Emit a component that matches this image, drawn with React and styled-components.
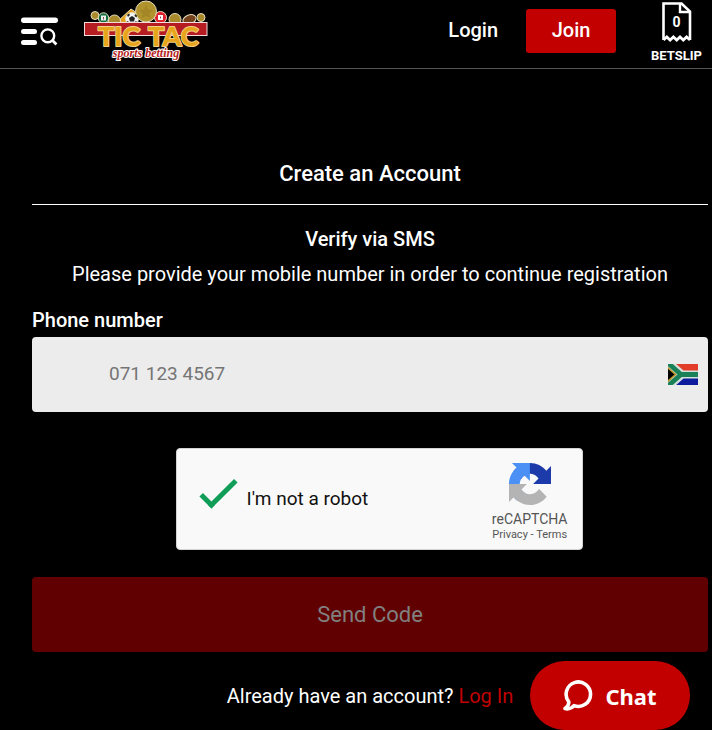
import React, { useState } from 'react'
import styled, { createGlobalStyle } from 'styled-components'

const App = () => {
  const [phone, setPhone] = useState('')

  return (
    <>
      <GlobalStyle />
      <Header>
        <IconButton aria-label="Menu and search">
          <MenuSearchIcon />
        </IconButton>
        <LogoLink href="#home" aria-label="Tic Tac sports betting">
          <Logo />
        </LogoLink>
        <LoginLink href="#login">Login</LoginLink>
        <JoinButton>Join</JoinButton>
        <BetslipButton>
          <BetslipCount>
            <BetslipIcon />
            <span>0</span>
          </BetslipCount>
          BETSLIP
        </BetslipButton>
      </Header>

      <Main>
        <Title>Create an Account</Title>
        <SubTitle>Verify via SMS</SubTitle>
        <Lead>Please provide your mobile number in order to continue registration</Lead>

        <form onSubmit={(e) => e.preventDefault()}>
          <Label htmlFor="phone">Phone number</Label>
          <PhoneField>
            <PhoneInput
              id="phone"
              type="tel"
              placeholder="071 123 4567"
              value={phone}
              onChange={(e) => setPhone(e.target.value)}
            />
            <Flag />
          </PhoneField>

          <CaptchaRow>
            <Captcha>
              <CaptchaCheck type="checkbox" id="robot" defaultChecked />
              <CaptchaLabel htmlFor="robot">I'm not a robot</CaptchaLabel>
              <CaptchaBrand>
                <CaptchaIcon />
                <span>reCAPTCHA</span>
                <CaptchaLinks>
                  <a href="#privacy">Privacy</a> - <a href="#terms">Terms</a>
                </CaptchaLinks>
              </CaptchaBrand>
            </Captcha>
          </CaptchaRow>

          <SendButton disabled>Send Code</SendButton>
        </form>

        <Footer>
          Already have an account? <a href="#login">Log In</a>
        </Footer>
      </Main>

      <ChatButton>
        <ChatIcon />
        Chat
      </ChatButton>
    </>
  )
}

const MenuSearchIcon = () => (
  <svg width="38" height="30" viewBox="0 0 38 30" fill="#fff">
    <rect x="0" y="0.5" width="37" height="5.5" rx="2.75" />
    <rect x="0" y="12" width="16" height="5" rx="2.5" />
    <rect x="0" y="23" width="16" height="5" rx="2.5" />
    <circle cx="26.8" cy="18.8" r="6.4" fill="none" stroke="#fff" strokeWidth="2.4" />
    <path d="M31.6 23.6l3.8 3.8" stroke="#fff" strokeWidth="2.8" />
  </svg>
)

const Logo = () => (
  <svg width="124" height="62" viewBox="0 0 124 62">
    <g stroke="#e8dfc0" strokeWidth="1">
      <path d="M33 22l14-13 6 4-6 10z" fill="#e3a21a" />
      <circle cx="11" cy="15.5" r="4" fill="#a98b2b" />
      <circle cx="30.5" cy="21" r="6" fill="#a98b2b" />
      <circle cx="19.5" cy="18" r="5.2" fill="#0d6b3d" />
      <circle cx="91" cy="19.5" r="6" fill="#a98b2b" />
      <ellipse cx="105.5" cy="19.5" rx="6.8" ry="4.6" fill="#74431b" transform="rotate(-20 105.5 19.5)" />
      <circle cx="117" cy="17.5" r="4" fill="#a98b2b" />
      <circle cx="48" cy="19" r="6.4" fill="#f4f4f4" />
      <circle cx="76.5" cy="17.5" r="6" fill="#e0202c" />
      <circle cx="62" cy="11.5" r="10.5" fill="#b0932c" />
    </g>
    <path d="M62 5l2 4.8 5.2.4-4 3.3 1.3 5.1-4.5-2.8-4.5 2.8 1.3-5.1-4-3.3 5.2-.4z" fill="#a38626" />
    <path d="M48 16l3 2-1 3.5h-4l-1-3.5zM43 15l2-1.5 1 1.5-2 2zM51 14l2 1.5-.5 2-2-1.5zM42.5 21l2 .5.5 2.5zM53 21l-2 .5-.5 2.5z" fill="#222" />
    <rect x="17" y="15.5" width="5" height="5" fill="#e9f2ec" />
    <rect x="74" y="15" width="5" height="5" fill="#fff" />
    <path d="M19.5 17v2.5M76.5 16.5v2" stroke="#8b4b4b" />
    <rect x="0.5" y="22.500" width="122.5" height="13" fill="#b51d23" stroke="#f2dcdc" />
    <g
      fontFamily="Lato, sans-serif"
      fontWeight="900"
      fontSize="27"
      fill="#e8a51b"
      stroke="#f0cf86"
      strokeWidth="2"
      paintOrder="stroke"
      strokeLinejoin="round"
    >
      <text x="14" y="46">TIC</text>
      <text x="64" y="46">TAC</text>
    </g>
    <text
      x="62"
      y="57"
      textAnchor="middle"
      fontFamily="'Liberation Serif', serif"
      fontStyle="italic"
      fontWeight="700"
      fontSize="12"
      fill="#b51d23"
      stroke="#fff"
      strokeWidth="2"
      paintOrder="stroke"
      strokeLinejoin="round"
    >
      sports betting
    </text>
  </svg>
)

const BetslipIcon = () => (
  <svg width="30" height="40" viewBox="0 0 30 40" fill="none" stroke="#fff" strokeWidth="2.6">
    <path d="M1.5 38V1.5h18l8.500 8V38" />
    <path d="M18 1.5V10h10" strokeWidth="2.4" />
    <path d="M1.5 38l3.300-3 3.300 3 3.300-3 3.300 3 3.300-3 3.300 3 3.300-3 3.400 3" strokeWidth="2.8" />
  </svg>
)

const Flag = () => (
  <svg width="30" height="21" viewBox="0 0 30 21" role="img" aria-label="South Africa">
    <path d="M0 0h30v10.500H0z" fill="#e23d28" />
    <path d="M0 10.500h30V21H0z" fill="#0c1c9c" />
    <path d="M1 -1l13 11.500L1 22M13 10.500h18" fill="none" stroke="#d5e0dc" strokeWidth="8" />
    <path d="M0 -1l13 11.500L0 22M12 10.500h19" fill="none" stroke="#1a8058" strokeWidth="4.800" />
    <path d="M-1 3l8.500 7.500L-1 18z" fill="#000" stroke="#b8982c" strokeWidth="1.6" />
  </svg>
)

const CaptchaIcon = () => (
  <svg width="42" height="42" viewBox="0 0 64 64">
    <path
      d="M64 31.955l-.033-1.370V4.687l-7.160 7.160C50.948 4.674 42.033.093 32.050.093c-10.400 0-19.622 4.960-25.458 12.640l11.736 11.860a15.550 15.550 0 0 1 4.754-5.334c2.050-1.600 4.952-2.906 8.968-2.906.485 0 .860.057 1.135.163 4.976.393 9.288 3.140 11.828 7.124l-8.307 8.307z"
      fill="#1c3aa9"
    />
    <path
      d="M31.862.094l-1.370.033H4.594l7.160 7.160C4.580 13.147 0 22.060 0 32.046c0 10.400 4.960 19.622 12.640 25.458L24.500 45.768a15.550 15.550 0 0 1-5.334-4.754c-1.600-2.050-2.906-4.952-2.906-8.968 0-.485.057-.860.163-1.135.393-4.976 3.140-9.288 7.124-11.828l8.307 8.307z"
      fill="#4a90f5"
    />
    <path
      d="M0 32.045l.033 1.370v25.898l7.160-7.160c5.860 7.173 14.774 11.754 24.760 11.754 10.400 0 19.622-4.960 25.458-12.640l-11.736-11.860a15.550 15.550 0 0 1-4.754 5.334c-2.050 1.600-4.952 2.906-8.968 2.906-.485 0-.860-.057-1.135-.163-4.976-.393-9.288-3.140-11.828-7.124l8.307-8.307z"
      fill="#b4b4b4"
    />
  </svg>
)

const ChatIcon = () => (
  <svg width="30" height="32" viewBox="0 0 30 32" fill="none" stroke="#fff" strokeWidth="3.6">
    <path
      d="M5.8 21.8A12.200 12.200 0 1 1 11 25.600C8.500 28.400 5 29.200 2 28.600C4.600 26.800 6 24.500 5.800 21.800z"
      strokeLinejoin="round"
    />
  </svg>
)

const GlobalStyle = createGlobalStyle`
  * {
    box-sizing: border-box;
  }

  body {
    margin: 0;
    background: #000;
    color: #fff;
    font-family: Roboto, 'Liberation Sans', sans-serif;
    font-size: 20px;
    line-height: 24px;
  }

  button,
  input {
    font: inherit;
  }

  button {
    border: 0;
    padding: 0;
    color: #fff;
    background: none;
  }

  a {
    color: inherit;
    text-decoration: none;
  }

  svg {
    display: block;
    flex-shrink: 0;
  }
`

const Header = styled.header`
  display: flex;
  align-items: flex-start;
  height: 69px;
  padding: 0 10px 0 21px;
  border-bottom: 1px solid #555;
`

const IconButton = styled.button`
  padding-top: 17px;
`

const LogoLink = styled.a`
  margin: 0 auto 0 25px;
`

const LoginLink = styled.a`
  padding-top: 18px;
  font-weight: 500;
`

const JoinButton = styled.button`
  width: 90px;
  height: 44px;
  margin: 9px 35px 0 28px;
  padding-bottom: 2px;
  border-radius: 3px;
  background: #c20000;
  font-weight: 500;
`

const BetslipButton = styled.button`
  display: flex;
  flex-direction: column;
  align-items: center;
  gap: 6px;
  padding-top: 2px;
  font-size: 13px;
  font-weight: 700;
  line-height: 16px;
`

const BetslipCount = styled.span`
  display: grid;
  place-items: center;
  font-size: 14px;

  > * {
    grid-area: 1 / 1;
  }
`

const Main = styled.main`
  padding: 92px 4px 20px 32px;
  text-align: center;
`

const Title = styled.h1`
  margin: 0 0 22px;
  padding-bottom: 17px;
  border-bottom: 1px solid #fff;
  font-size: 22px;
  font-weight: 500;
  line-height: 26px;
`

const SubTitle = styled.h2`
  margin: 0 0 11px;
  font-size: 20px;
  font-weight: 500;
  line-height: 24px;
`

const Lead = styled.p`
  margin: 0 0 22px;
`

const Label = styled.label`
  display: block;
  margin-bottom: 5px;
  font-weight: 500;
  text-align: left;
`

const PhoneField = styled.div`
  display: flex;
  align-items: center;
  height: 75px;
  padding-right: 10px;
  border-radius: 4px;
  background: #ececec;
`

const PhoneInput = styled.input`
  flex: 1;
  min-width: 0;
  height: 100%;
  padding: 0 20px 2px 77px;
  border: 0;
  outline: 0;
  background: none;
  color: #333;
  font-size: 19px;

  &::placeholder {
    color: #757575;
  }
`

const CaptchaRow = styled.div`
  display: flex;
  justify-content: center;
  padding: 36px 0 27px 18px;
`

const Captcha = styled.div`
  display: flex;
  align-items: center;
  width: 407px;
  height: 102px;
  padding: 0 14px 0 23px;
  border: 1px solid #d3d3d3;
  border-radius: 4px;
  background: #f9f9f9;
  color: #111;
`

const CaptchaCheck = styled.input`
  appearance: none;
  display: grid;
  place-items: center;
  width: 38px;
  height: 60px;
  margin: 0 9px 0 0;

  &:checked::before {
    content: '';
    box-sizing: border-box;
    width: 17px;
    height: 37px;
    margin-bottom: 20px;
    border: solid #0f9d58;
    border-width: 0 5px 5px 0;
    transform: rotate(45deg);
  }
`

const CaptchaLabel = styled.label`
  flex: 1;
  font-size: 19px;
  text-align: left;
`

const CaptchaBrand = styled.div`
  display: flex;
  flex-direction: column;
  align-items: center;
  padding-top: 8px;
  color: #555;
  font-size: 14px;
  line-height: 16px;

  svg {
    margin-bottom: 6px;
  }
`

const CaptchaLinks = styled.small`
  font-size: 11px;
`

const SendButton = styled.button`
  display: block;
  width: 100%;
  height: 75px;
  border-radius: 4px;
  background: #610000;
  color: #808080;
  font-size: 22px;
`

const Footer = styled.p`
  margin: 32px 0 0;

  a {
    color: #c20000;
  }
`

const ChatButton = styled.button`
  position: fixed;
  right: 22px;
  bottom: 0;
  display: flex;
  align-items: center;
  justify-content: center;
  gap: 12px;
  width: 160px;
  height: 69px;
  border-radius: 35px;
  background: #c20000;
  font-family: 'Noto Sans', sans-serif;
  font-size: 22px;
  font-weight: 700;
`

export default App
